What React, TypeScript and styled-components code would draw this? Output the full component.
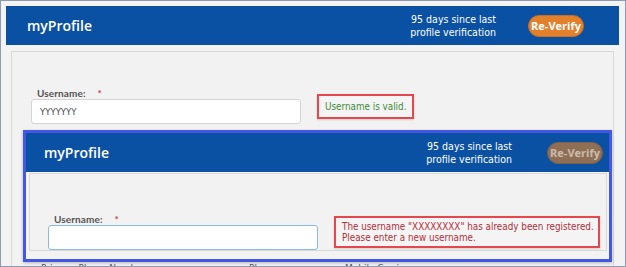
import React from "react";
import styled, { createGlobalStyle } from "styled-components";

const GlobalStyle = createGlobalStyle`
  html, body {
    margin: 0;
    padding: 0;
    background: #ffffff;
  }
  * {
    box-sizing: border-box;
  }
`;

const Frame = styled.div`
  width: 626px;
  height: 267px;
  overflow: hidden;
  border: 1px solid #8c9bb0;
  background: #f3f3f3;
  padding: 5px 6px 0 5px;
  font-family: Lato, "Open Sans", sans-serif;
`;

const Header = styled.div<{ $padLeft: number; $padRight: number }>`
  height: 39px;
  background: #0b51a3;
  display: flex;
  align-items: center;
  padding: 0 ${(p) => p.$padRight}px 0 ${(p) => p.$padLeft}px;
`;

const Title = styled.div`
  flex: 1;
  color: #ffffff;
  font-family: "Open Sans", Lato, sans-serif;
  font-size: 14px;
  font-weight: 600;
  padding-bottom: 1px;
`;

const Notice = styled.div<{ $gap: number }>`
  color: #ffffff;
  font-family: "DejaVu Sans Condensed", "Liberation Sans", sans-serif;
  font-size: 10.5px;
  line-height: 13px;
  text-align: right;
  margin-right: ${(p) => p.$gap}px;
`;

const VerifyButton = styled.div<{ $muted?: boolean }>`
  height: 22px;
  width: 56px;
  border-radius: 11px;
  display: flex;
  align-items: center;
  justify-content: center;
  font-family: "Open Sans", sans-serif;
  font-size: 11px;
  font-weight: 700;
  background: ${(p) => (p.$muted ? "#8e6f56" : "#e3802c")};
  color: ${(p) => (p.$muted ? "#cbbcad" : "#ffffff")};
  border: 1px solid ${(p) => (p.$muted ? "#7d6049" : "#c96d20")};
`;

const Panel = styled.div<{ $padTop: number; $margin: string }>`
  margin: ${(p) => p.$margin};
  border: 1px solid #d9d9d9;
  background: #f2f2f2;
  padding-top: ${(p) => p.$padTop}px;
`;

const FieldRow = styled.div<{ $indent: number }>`
  display: flex;
  align-items: center;
  gap: 16px;
  margin-left: ${(p) => p.$indent}px;
`;

const Field = styled.div`
  width: 270px;
  display: flex;
  flex-direction: column;
`;

const Label = styled.div`
  font-size: 10px;
  font-weight: 700;
  line-height: 11px;
  color: #525252;
  padding-left: 6px;
  letter-spacing: 0.1px;

  span {
    color: #c9434a;
    margin-left: 12px;
  }
`;

const Input = styled.div<{ $focus?: boolean }>`
  height: 25px;
  background: #ffffff;
  border: 1px solid ${(p) => (p.$focus ? "#8cb9e8" : "#d4d4d4")};
  border-radius: 3px;
  padding-left: 8px;
  display: flex;
  align-items: center;
  font-family: "DejaVu Sans Condensed", "Liberation Sans", sans-serif;
  font-size: 9.5px;
  color: #4a4a4a;
`;

const Message = styled.div<{ $tone: "ok" | "error" }>`
  border: 2px solid #e2484d;
  background: #f4f4f4;
  padding: ${(p) => (p.$tone === "ok" ? "5px 6px" : "3px 4px 3px 6px")};
  font-family: "DejaVu Sans Condensed", "Liberation Sans", sans-serif;
  font-size: 9.8px;
  line-height: 11px;
  color: ${(p) => (p.$tone === "ok" ? "#3f8a3a" : "#b32f3a")};
  box-shadow: 0 1px 2px rgba(0, 0, 0, 0.15);
`;

const Overlay = styled.div`
  margin: 6px 1px 0 11px;
  height: 132px;
  overflow: hidden;
  border: 3px solid #4257e3;
  background: #f3f3f3;
  box-shadow: 0 1px 3px rgba(0, 0, 0, 0.25);
`;

const CutRow = styled.div`
  display: flex;
  margin-top: 1px;
  padding-left: 29px;
  font-family: "DejaVu Sans Condensed", "Liberation Sans", sans-serif;
  font-size: 10px;
  line-height: 12px;
  color: #555555;
`;

const CutCell = styled.div<{ $w: number }>`
  width: ${(p) => p.$w}px;
`;

export default function App() {
  return (
    <>
      <GlobalStyle />
      <Frame>
        <Header $padLeft={21} $padRight={35}>
          <Title>myProfile</Title>
          <Notice $gap={32}>
            95 days since last
            <br />
            profile verification
          </Notice>
          <VerifyButton>Re-Verify</VerifyButton>
        </Header>
        <Panel $padTop={36} $margin="6px 5px 0 5px">
          <FieldRow $indent={19}>
            <Field>
              <Label>
                Username:<span>*</span>
              </Label>
              <Input>YYYYYYY</Input>
            </Field>
            <Message $tone="ok">Username is valid.</Message>
          </FieldRow>
          <Overlay>
            <Header $padLeft={18} $padRight={6}>
              <Title>myProfile</Title>
              <Notice $gap={35}>
                95 days since last
                <br />
                profile verification
              </Notice>
              <VerifyButton $muted>Re-Verify</VerifyButton>
            </Header>
            <Panel $padTop={40} $margin="1px 2px 0 3px">
              <FieldRow $indent={18}>
                <Field>
                  <Label>
                    Username:<span>*</span>
                  </Label>
                  <Input $focus />
                </Field>
                <Message $tone="error">
                  The username "XXXXXXXX" has already been registered.
                  <br />
                  Please enter a new username.
                </Message>
              </FieldRow>
            </Panel>
          </Overlay>
          <CutRow>
            <CutCell $w={208}>Primary Phone Number</CutCell>
            <CutCell $w={96}>Phone</CutCell>
            <CutCell $w={120}>Mobile Carrier</CutCell>
          </CutRow>
        </Panel>
      </Frame>
    </>
  );
}
